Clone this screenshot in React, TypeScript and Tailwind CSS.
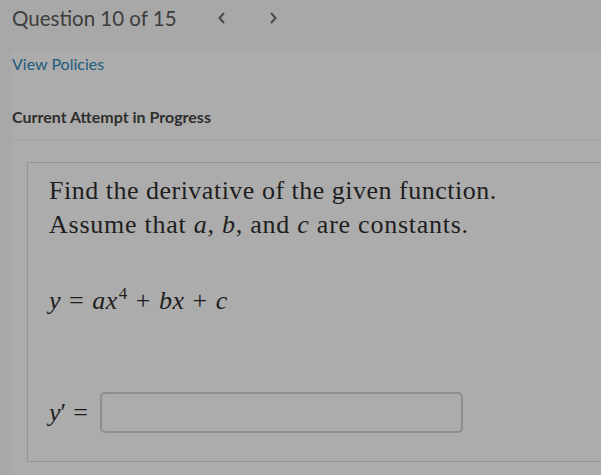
export default function App() {
  return (
    <div className="w-[601px] h-[475px] overflow-hidden bg-[#a8a8a8] font-['Lato','Noto_Sans',sans-serif]">
      {/* top bar */}
      <div className="h-[52px] flex items-start pt-[4px] pl-3">
        <span className="text-[20.5px] leading-[28px] text-[#3d3d3d]">Question 10 of 15</span>
        <span className="ml-[40px] mt-[7px] text-[#4a4a4a]">
          <svg width="10" height="14" viewBox="0 0 10 14" fill="none">
            <path d="M7 2L2.5 7L7 12" stroke="currentColor" strokeWidth="2" />
          </svg>
        </span>
        <span className="ml-[41px] mt-[7px] text-[#4a4a4a]">
          <svg width="10" height="14" viewBox="0 0 10 14" fill="none">
            <path d="M3 2L7.5 7L3 12" stroke="currentColor" strokeWidth="2" />
          </svg>
        </span>
      </div>

      {/* content */}
      <div className="ml-3 bg-[#acacac] h-[423px]">
        <div className="pt-[1px] leading-[22px] text-[16px] text-[#1d5b7c]">View Policies</div>
        <div className="pt-[31px] leading-[22px] text-[16px] font-bold text-[#2e2e2e]">Current Attempt in Progress</div>
        <div className="mt-[11px] border-t border-[#a2a2a2]" />

        <div className="mt-[22px] ml-[15px] h-[300px] border border-r-0 border-[#969696] pl-[21px] pt-[11px] text-[#1e1e1e] font-['Liberation_Serif','Times_New_Roman',serif]">
          <div className="text-[26px] tracking-[0.5px] leading-[34px]">Find the derivative of the given function.</div>
          <div className="text-[26px] tracking-[0.75px] leading-[34px]">
            Assume that <i>a</i>, <i>b</i>, and <i>c</i> are constants.
          </div>

          <div className="mt-[42px] text-[26px] leading-[34px] tracking-[0.5px]">
            <i>y</i>
            <span className="mx-[8px]">=</span>
            <i>ax</i>
            <sup className="text-[17px] -top-[10px] ml-[1px]">4</sup>
            <span className="mx-[8px]">+</span>
            <i>bx</i>
            <span className="mx-[8px]">+</span>
            <i>c</i>
          </div>

          <div className="mt-[74px] flex items-center">
            <span className="text-[26px] w-[51px]">
              <i>y</i>′<span className="ml-[7px]">=</span>
            </span>
            <div className="w-[363px] h-[41px] rounded-[5px] border-2 border-[#8e8e8e]" />
          </div>
        </div>
      </div>
    </div>
  );
}
